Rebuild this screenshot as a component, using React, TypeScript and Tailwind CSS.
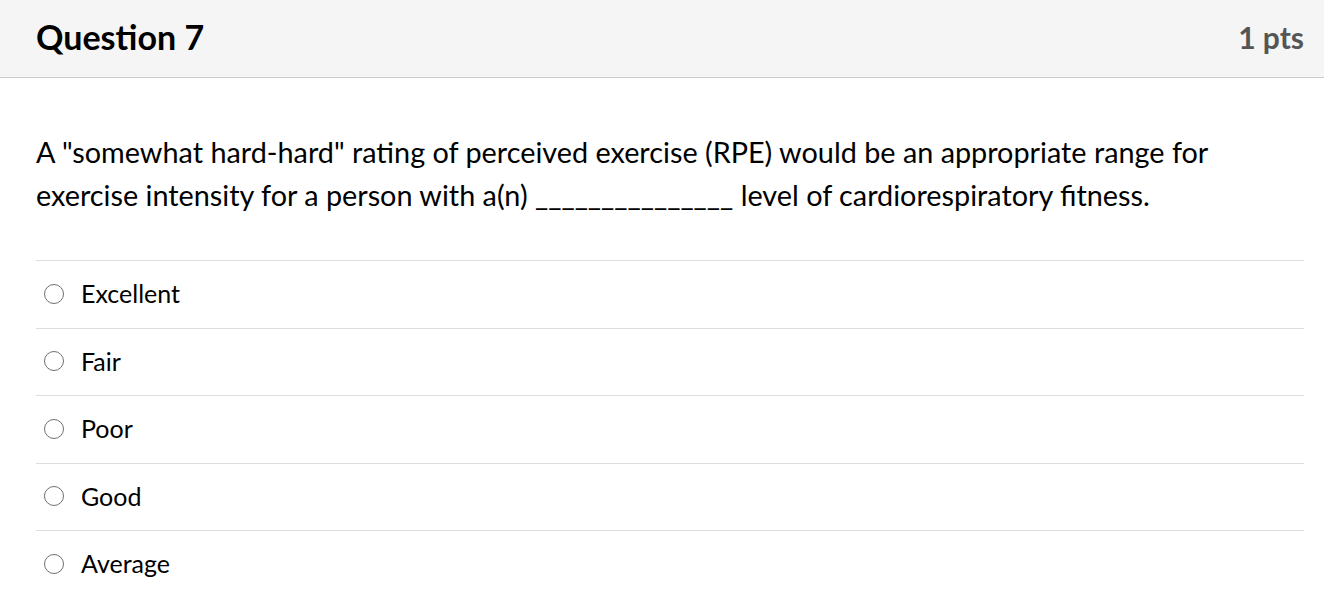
export default function App() {
  const answers = ['Excellent', 'Fair', 'Poor', 'Good', 'Average'];
  return (
    <div className="w-[1324px] h-[602px] bg-white overflow-hidden text-black" style={{ fontFamily: 'Lato, "Open Sans", sans-serif' }}>
      {/* header */}
      <div className="h-[78px] bg-[#f5f5f5] border-b border-[#c7cdd1] flex items-center justify-between pl-[36px] pr-[20px] pb-[3px]">
        <h2 className="text-[34px] font-bold leading-none">Question 7</h2>
        <div className="text-[30px] font-bold text-[#555555] leading-none">1 pts</div>
      </div>

      <div className="px-[36px] pr-[20px]">
        <p className="mt-[53px] text-[28.8px] leading-[43px]">
          A "somewhat hard-hard" rating of perceived exercise (RPE) would be an appropriate range for exercise intensity for a person with a(n) _______________ level of cardiorespiratory fitness.
        </p>

        <div className="mt-[43px]">
          {answers.map((a) => (
            <label key={a} className="flex items-center h-[67.5px] border-t border-[#dddddd] pb-[1px]">
              <span className="ml-[8px] w-[20px] h-[20px] rounded-full border-[1.5px] border-[#707070] bg-white shrink-0" />
              <span className="ml-[17px] text-[25px]">{a}</span>
            </label>
          ))}
        </div>
      </div>
    </div>
  );
}
